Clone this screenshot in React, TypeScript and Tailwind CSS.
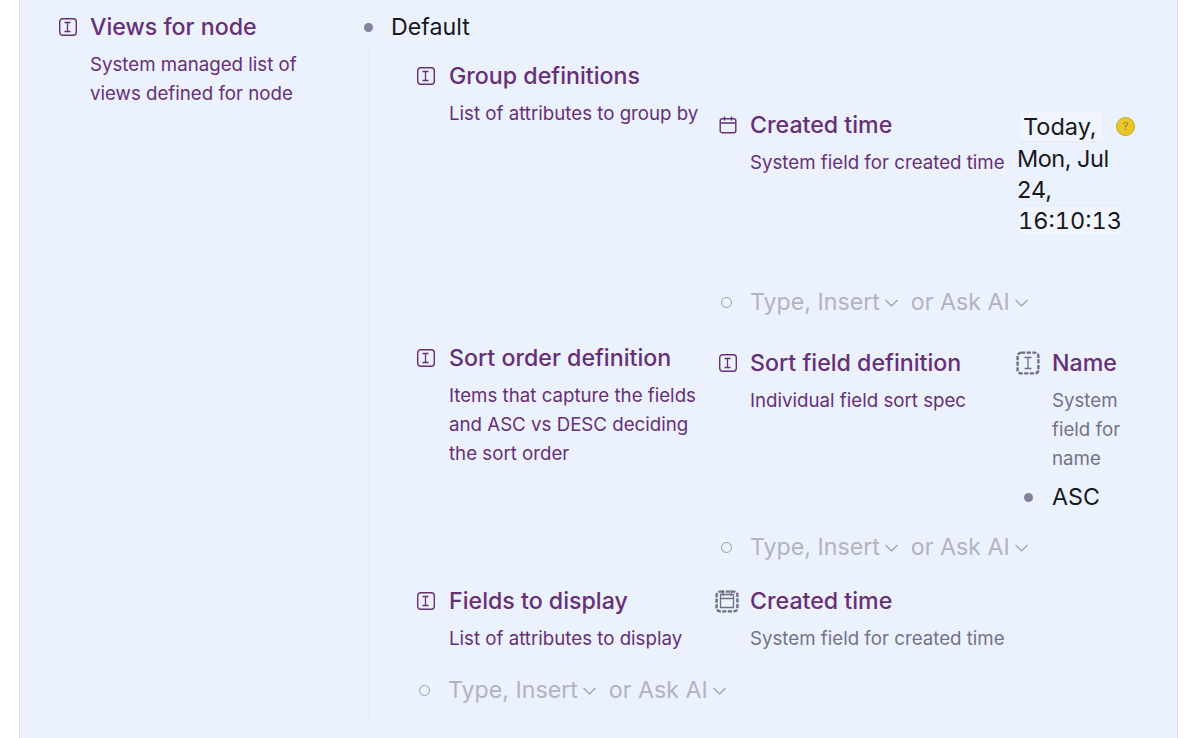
import type { ReactNode } from "react";

const purple = "text-[#672f77]";

function AttributeIcon({ dashed = false }: { dashed?: boolean }) {
  if (dashed) {
    return (
      <svg width="24" height="24" viewBox="0 0 24 24" fill="none" className="-ml-[1px] text-[#6f6f85]">
        <rect x="1.6" y="1.6" width="20.8" height="20.8" rx="3.5" stroke="currentColor" strokeWidth="2.4" strokeDasharray="4.2 1.4" />
        <path d="M8.5 6.5h7M12 6.5v11M8.5 17.5h7" stroke="currentColor" strokeWidth="1.3" />
      </svg>
    );
  }
  return (
    <svg width="18" height="18" viewBox="0 0 18 18" fill="none" className="text-[#672f77]">
      <rect x="0.7" y="0.7" width="16.6" height="16.6" rx="3" stroke="currentColor" strokeWidth="1.4" />
      <path d="M5.5 4.5h6M8.5 4.5v9M5.5 13.5h6" stroke="currentColor" strokeWidth="1.3" />
    </svg>
  );
}

function CalendarIcon({ dashed = false }: { dashed?: boolean }) {
  if (dashed) {
    return (
      <svg width="24" height="24" viewBox="0 0 24 24" fill="none" className="text-[#6f6f85]">
        <rect x="1.6" y="2.6" width="20.8" height="19.8" rx="3.5" stroke="currentColor" strokeWidth="2.4" strokeDasharray="4.2 1.4" />
        <path d="M5 9.5h14M5.5 5.5h13v13h-13zM8 1v6M16 1v6" stroke="currentColor" strokeWidth="1.3" />
      </svg>
    );
  }
  return (
    <svg width="18" height="18" viewBox="0 0 18 18" fill="none" className="text-[#672f77]">
      <rect x="1.2" y="2.7" width="15.6" height="14" rx="2" stroke="currentColor" strokeWidth="1.4" />
      <path d="M1.2 7h15.6M5.5 0.5v4M12.5 0.5v4" stroke="currentColor" strokeWidth="1.4" />
    </svg>
  );
}

function Chevron() {
  return (
    <svg width="15" height="15" viewBox="0 0 15 15" fill="none" className="text-[#9c9cb0]">
      <path d="M1.5 5l6 6 6-6" stroke="currentColor" strokeWidth="1.2" />
    </svg>
  );
}

function Field({
  icon,
  title,
  desc,
  textWidth,
  iconWidth = "w-[31px]",
  muted = false,
}: {
  icon: ReactNode;
  title: string;
  desc: string;
  textWidth: string;
  iconWidth?: string;
  muted?: boolean;
}) {
  return (
    <div className="flex">
      <div className={`${iconWidth} flex h-[29px] shrink-0 items-center`}>{icon}</div>
      <div className={textWidth}>
        <div className={`text-[23.2px] leading-[29px] font-medium whitespace-nowrap ${purple}`}>{title}</div>
        <div className={`mt-2 text-[18.7px] leading-[29px] ${muted ? "text-[#73738a]" : purple}`}>{desc}</div>
      </div>
    </div>
  );
}

function Placeholder() {
  return (
    <div className="flex h-[29px] items-center text-[23.2px] text-[#b2b2c2]">
      <span className="flex w-[31px] shrink-0 pl-[2px]">
        <span className="h-[11px] w-[11px] rounded-full border-[1.5px] border-[#9a9aae]" />
      </span>
      <span className="whitespace-nowrap">Type, Insert</span>
      <span className="ml-[4px]">
        <Chevron />
      </span>
      <span className="ml-[12px] whitespace-nowrap">or Ask AI</span>
      <span className="ml-[4px]">
        <Chevron />
      </span>
    </div>
  );
}

function Bullet() {
  return <span className="h-[9px] w-[9px] rounded-full bg-[#82829a]" />;
}

function TimeValue() {
  return (
    <div className="relative w-[110px] text-[23.5px] whitespace-nowrap text-[#18181b]">
      <div className="ml-[2px] h-[31px] w-[83px] rounded-l-[3px] border-y border-l border-[#e8eef8] bg-[#eff4fd] pl-[3px] leading-[29px]">
        Today,
      </div>
      <div className="h-[32px] w-[99px] border-t border-[#e8eef8] leading-[31px] tracking-[-0.5px]">Mon, Jul</div>
      <div className="h-[31px] w-[42px] border-t border-[#e8eef8] leading-[30px]">24,</div>
      <div className="h-[31px] w-[106px] rounded-[3px] border border-[#e8eef8] bg-[#eff4fd] leading-[29px] tabular-nums">
        16:10:13
      </div>
      <span className="absolute top-[6px] left-[99px] flex h-[19px] w-[19px] items-center justify-center rounded-full border border-[#c9a80f] bg-[#e9c62b] text-[11px] leading-none text-[#9c8514]">
        ?
      </span>
    </div>
  );
}

export default function App() {
  return (
    <div className="h-[738px] w-[1200px] overflow-hidden bg-white font-['Inter',sans-serif]">
      <div className="ml-[19px] h-full w-[1159px] border-x border-[#d2e0fb] bg-[#ebf2fe] pt-[12.5px] pl-[39px]">
        <div className="flex">
          <Field
            icon={<AttributeIcon />}
            title="Views for node"
            desc="System managed list of views defined for node"
            textWidth="w-[238px]"
          />
          <div className="flex h-[29px] w-[63px] items-center pl-[36px]">
            <Bullet />
          </div>
          <div>
            <div className="h-[29px] text-[23.2px] leading-[29px] text-[#18181b]">Default</div>
            <div className="relative mt-[3px] -ml-[23px] border-l border-[#e6edfa] pt-[17px] pl-[48px]">
              <div className="flex">
                <Field
                  icon={<AttributeIcon />}
                  title="Group definitions"
                  desc="List of attributes to group by"
                  textWidth="w-[270px]"
                  iconWidth="w-[32px]"
                />
                <div className="pt-[49px]">
                  <div className="flex">
                    <Field
                      icon={<CalendarIcon />}
                      title="Created time"
                      desc="System field for created time"
                      textWidth="w-[267px]"
                    />
                    <TimeValue />
                  </div>
                  <div className="mt-[52px]">
                    <Placeholder />
                  </div>
                </div>
              </div>

              <div className="mt-[27px] flex">
                <Field
                  icon={<AttributeIcon />}
                  title="Sort order definition"
                  desc="Items that capture the fields and ASC vs DESC deciding the sort order"
                  textWidth="w-[270px]"
                  iconWidth="w-[32px]"
                />
                <div className="pt-[5px]">
                  <div className="flex">
                    <Field
                      icon={<AttributeIcon />}
                      title="Sort field definition"
                      desc="Individual field sort spec"
                      textWidth="w-[267px]"
                    />
                    <div>
                      <Field
                        icon={<AttributeIcon dashed />}
                        title="Name"
                        desc="System field for name"
                        textWidth="w-[70px]"
                        iconWidth="w-[35px]"
                        muted
                      />
                      <div className="mt-[10px] flex h-[29px] items-center text-[23.2px] text-[#18181b]">
                        <span className="ml-[7px] flex w-[28px]">
                          <Bullet />
                        </span>
                        ASC
                      </div>
                    </div>
                  </div>
                  <div className="mt-[21px]">
                    <Placeholder />
                  </div>
                </div>
              </div>

              <div className="mt-[25px] flex">
                <Field
                  icon={<AttributeIcon />}
                  title="Fields to display"
                  desc="List of attributes to display"
                  textWidth="w-[270px]"
                  iconWidth="w-[32px]"
                />
                <div className="-ml-[4px]">
                  <Field
                    icon={<CalendarIcon dashed />}
                    title="Created time"
                    desc="System field for created time"
                    textWidth="w-[267px]"
                    iconWidth="w-[35px]"
                    muted
                  />
                </div>
              </div>
              <div className="mt-[23px] pb-[20px]">
                <Placeholder />
              </div>
            </div>
          </div>
        </div>
      </div>
    </div>
  );
}
